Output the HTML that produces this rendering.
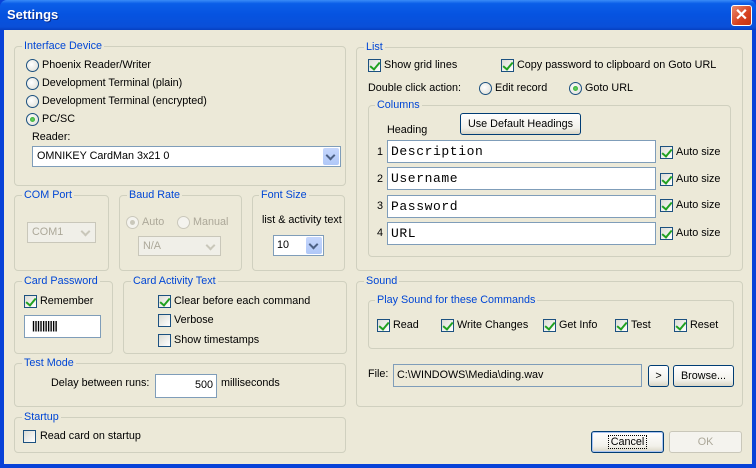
<!DOCTYPE html>
<html><head><meta charset="utf-8"><style>
*{margin:0;padding:0;box-sizing:border-box}
body{width:756px;height:468px;overflow:hidden;background:#0842d8;font-family:"Liberation Sans",Tahoma,sans-serif;font-size:10.8px;color:#000;position:relative}
.a{position:absolute}
#title{left:0;top:0;width:756px;height:30px;background:linear-gradient(#3a8cf7 0%,#0a5ee8 12%,#0653e0 50%,#0a4fd8 90%,#073fc0 100%);border-radius:7px 7px 0 0}
#title span{position:absolute;left:7px;top:7px;color:#fff;font-weight:bold;font-size:13px;text-shadow:1px 1px #0a2a8a}
#close{left:731px;top:5px;width:21px;height:21px;border:1px solid #fff;border-radius:3px;background:linear-gradient(135deg,#e98a6e,#d6401e 60%,#c53411);color:#fff;font-size:16px;font-weight:bold;text-align:center;line-height:19px}
#client{left:4px;top:30px;width:748px;height:434px;background:#ece9d8}
.g{position:absolute;border:1px solid #d0d0bf;border-radius:4px}
.lg{position:absolute;background:#ece9d8;color:#0046d5;padding:0 2px;white-space:nowrap}
.t{position:absolute;white-space:nowrap}
.rb{position:absolute;width:13px;height:13px;border:1px solid #1c5180;border-radius:50%;background:radial-gradient(circle at 40% 40%,#fff,#dcdcd3)}
.rb.on:after{content:"";position:absolute;left:3px;top:3px;width:5px;height:5px;border-radius:50%;background:radial-gradient(#6fd36a,#21a121)}
.rb.dis{border-color:#cac8bb;background:#f4f3ee}
.rb.dis.on:after{background:#cac8bb}
.cb{position:absolute;width:13px;height:13px;border:1px solid #1c5180;background:linear-gradient(135deg,#dcdcd5,#fff)}
.cb.on:after{content:"";position:absolute;left:3px;top:0px;width:4px;height:8px;border:solid #21a121;border-width:0 2px 2px 0;transform:rotate(40deg)}
.in{position:absolute;border:1px solid #7f9db9;background:#fff}
.cbo{position:absolute;border:1px solid #7f9db9;background:#fff}
.dd{position:absolute;right:1px;top:1px;bottom:1px;width:16px;background:linear-gradient(#c5d6fc,#b0c8f8);border-radius:2px}
.dd:after{content:"";position:absolute;left:4px;top:4px;width:5px;height:5px;border:solid #4d6185;border-width:0 2px 2px 0;transform:rotate(45deg)}
.dis .dd{background:#f0efe8}.dis .dd:after{border-color:#c9c7ba}
.cbo.dis{border-color:#c9c7ba;background:#f0efe8;color:#aca899}
.btn{position:absolute;border:1px solid #003c74;border-radius:3px;background:linear-gradient(#fff,#f2f1ea 70%,#d9d6c6);text-align:center}
.mono{font-family:"Liberation Mono",monospace;font-size:13px;font-weight:normal;letter-spacing:0.6px}
.gray{color:#aca899}
</style></head><body>
<div class="a" id="title"><span>Settings</span></div>
<div class="a" id="close">✕</div>
<div class="a" id="client"></div>

<div class="g" style="left:14px;top:46px;width:332px;height:140px"></div>
<div class="lg" style="left:22px;top:40px">Interface Device</div>
<div class="rb" style="left:26px;top:59px"></div><div class="t" style="left:42px;top:59px">Phoenix Reader/Writer</div>
<div class="rb" style="left:26px;top:77px"></div><div class="t" style="left:42px;top:77px">Development Terminal (plain)</div>
<div class="rb" style="left:26px;top:95px"></div><div class="t" style="left:42px;top:95px">Development Terminal (encrypted)</div>
<div class="rb on" style="left:26px;top:113px"></div><div class="t" style="left:42px;top:113px">PC/SC</div>
<div class="t" style="left:32px;top:131px">Reader:</div>
<div class="cbo" style="left:32px;top:146px;width:309px;height:21px"><div class="t" style="left:4px;top:3px">OMNIKEY CardMan 3x21 0</div><div class="dd"></div></div>

<div class="g" style="left:14px;top:195px;width:95px;height:76px"></div>
<div class="lg" style="left:22px;top:189px">COM Port</div>
<div class="cbo dis" style="left:27px;top:222px;width:69px;height:21px"><div class="t" style="left:4px;top:3px">COM1</div><div class="dd"></div></div>

<div class="g" style="left:119px;top:195px;width:123px;height:76px"></div>
<div class="lg" style="left:127px;top:189px">Baud Rate</div>
<div class="rb dis on" style="left:126px;top:216px"></div><div class="t gray" style="left:142px;top:216px">Auto</div>
<div class="rb dis" style="left:177px;top:216px"></div><div class="t gray" style="left:193px;top:216px">Manual</div>
<div class="cbo dis" style="left:138px;top:236px;width:83px;height:20px"><div class="t" style="left:4px;top:3px">N/A</div><div class="dd"></div></div>

<div class="g" style="left:252px;top:195px;width:93px;height:76px"></div>
<div class="lg" style="left:259px;top:189px">Font Size</div>
<div class="t" style="left:262px;top:214px">list &amp; activity text</div>
<div class="cbo" style="left:273px;top:235px;width:51px;height:21px"><div class="t" style="left:3px;top:3px">10</div><div class="dd"></div></div>

<div class="g" style="left:14px;top:281px;width:99px;height:73px"></div>
<div class="lg" style="left:22px;top:275px">Card Password</div>
<div class="cb on" style="left:24px;top:295px"></div><div class="t" style="left:40px;top:295px">Remember</div>
<div class="in" style="left:24px;top:315px;width:77px;height:23px"><div class="t" style="left:7px;top:4px;font-weight:bold;letter-spacing:-0.5px">||||||||||</div></div>

<div class="g" style="left:123px;top:281px;width:224px;height:73px"></div>
<div class="lg" style="left:131px;top:275px">Card Activity Text</div>
<div class="cb on" style="left:158px;top:295px"></div><div class="t" style="left:174px;top:295px">Clear before each command</div>
<div class="cb" style="left:158px;top:314px"></div><div class="t" style="left:174px;top:314px">Verbose</div>
<div class="cb" style="left:158px;top:334px"></div><div class="t" style="left:174px;top:334px">Show timestamps</div>

<div class="g" style="left:14px;top:363px;width:332px;height:44px"></div>
<div class="lg" style="left:22px;top:357px">Test Mode</div>
<div class="t" style="left:51px;top:377px">Delay between runs:</div>
<div class="in" style="left:155px;top:374px;width:62px;height:24px"><div class="t" style="right:3px;top:4px">500</div></div>
<div class="t" style="left:221px;top:377px">milliseconds</div>

<div class="g" style="left:14px;top:417px;width:332px;height:36px"></div>
<div class="lg" style="left:22px;top:411px">Startup</div>
<div class="cb" style="left:23px;top:430px"></div><div class="t" style="left:40px;top:430px">Read card on startup</div>

<div class="g" style="left:356px;top:47px;width:387px;height:224px"></div>
<div class="lg" style="left:364px;top:41px">List</div>
<div class="cb on" style="left:368px;top:59px"></div><div class="t" style="left:384px;top:59px">Show grid lines</div>
<div class="cb on" style="left:501px;top:59px"></div><div class="t" style="left:517px;top:59px">Copy password to clipboard on Goto URL</div>
<div class="t" style="left:368px;top:82px">Double click action:</div>
<div class="rb" style="left:479px;top:82px"></div><div class="t" style="left:495px;top:82px">Edit record</div>
<div class="rb on" style="left:569px;top:82px"></div><div class="t" style="left:585px;top:82px">Goto URL</div>
<div class="g" style="left:368px;top:105px;width:363px;height:152px"></div>
<div class="lg" style="left:375px;top:99px">Columns</div>
<div class="btn" style="left:460px;top:113px;width:121px;height:22px;line-height:20px">Use Default Headings</div>
<div class="t" style="left:387px;top:124px">Heading</div>
<div class="t" style="left:377px;top:146px">1</div><div class="in mono" style="left:387px;top:140px;width:269px;height:23px"><div class="t" style="left:3px;top:3px">Description</div></div>
<div class="cb on" style="left:660px;top:146px"></div><div class="t" style="left:676px;top:146px">Auto size</div>
<div class="t" style="left:377px;top:173px">2</div><div class="in mono" style="left:387px;top:167px;width:269px;height:23px"><div class="t" style="left:3px;top:3px">Username</div></div>
<div class="cb on" style="left:660px;top:173px"></div><div class="t" style="left:676px;top:173px">Auto size</div>
<div class="t" style="left:377px;top:200px">3</div><div class="in mono" style="left:387px;top:195px;width:269px;height:23px"><div class="t" style="left:3px;top:3px">Password</div></div>
<div class="cb on" style="left:660px;top:199px"></div><div class="t" style="left:676px;top:199px">Auto size</div>
<div class="t" style="left:377px;top:227px">4</div><div class="in mono" style="left:387px;top:222px;width:269px;height:23px"><div class="t" style="left:3px;top:3px">URL</div></div>
<div class="cb on" style="left:660px;top:227px"></div><div class="t" style="left:676px;top:227px">Auto size</div>

<div class="g" style="left:356px;top:281px;width:387px;height:126px"></div>
<div class="lg" style="left:364px;top:275px">Sound</div>
<div class="g" style="left:368px;top:300px;width:366px;height:49px"></div>
<div class="lg" style="left:375px;top:294px">Play Sound for these Commands</div>
<div class="cb on" style="left:377px;top:319px"></div><div class="t" style="left:393px;top:319px">Read</div>
<div class="cb on" style="left:441px;top:319px"></div><div class="t" style="left:457px;top:319px">Write Changes</div>
<div class="cb on" style="left:543px;top:319px"></div><div class="t" style="left:559px;top:319px">Get Info</div>
<div class="cb on" style="left:615px;top:319px"></div><div class="t" style="left:631px;top:319px">Test</div>
<div class="cb on" style="left:674px;top:319px"></div><div class="t" style="left:690px;top:319px">Reset</div>
<div class="t" style="left:368px;top:368px">File:</div>
<div class="in" style="left:393px;top:364px;width:249px;height:23px;background:#ece9d8"><div class="t" style="left:3px;top:4px">C:\WINDOWS\Media\ding.wav</div></div>
<div class="btn" style="left:648px;top:365px;width:21px;height:22px;line-height:20px">&gt;</div>
<div class="btn" style="left:673px;top:365px;width:61px;height:22px;line-height:20px">Browse...</div>

<div class="btn" style="left:591px;top:431px;width:73px;height:22px;line-height:20px;box-shadow:inset 0 0 0 1px #aac4f2"><span style="outline:1px dotted #000;padding:0 2px">Cancel</span></div>
<div class="btn" style="left:669px;top:431px;width:73px;height:22px;line-height:20px;border-color:#c9c7ba;background:#f4f3ee;color:#aca899">OK</div>
</body></html>
